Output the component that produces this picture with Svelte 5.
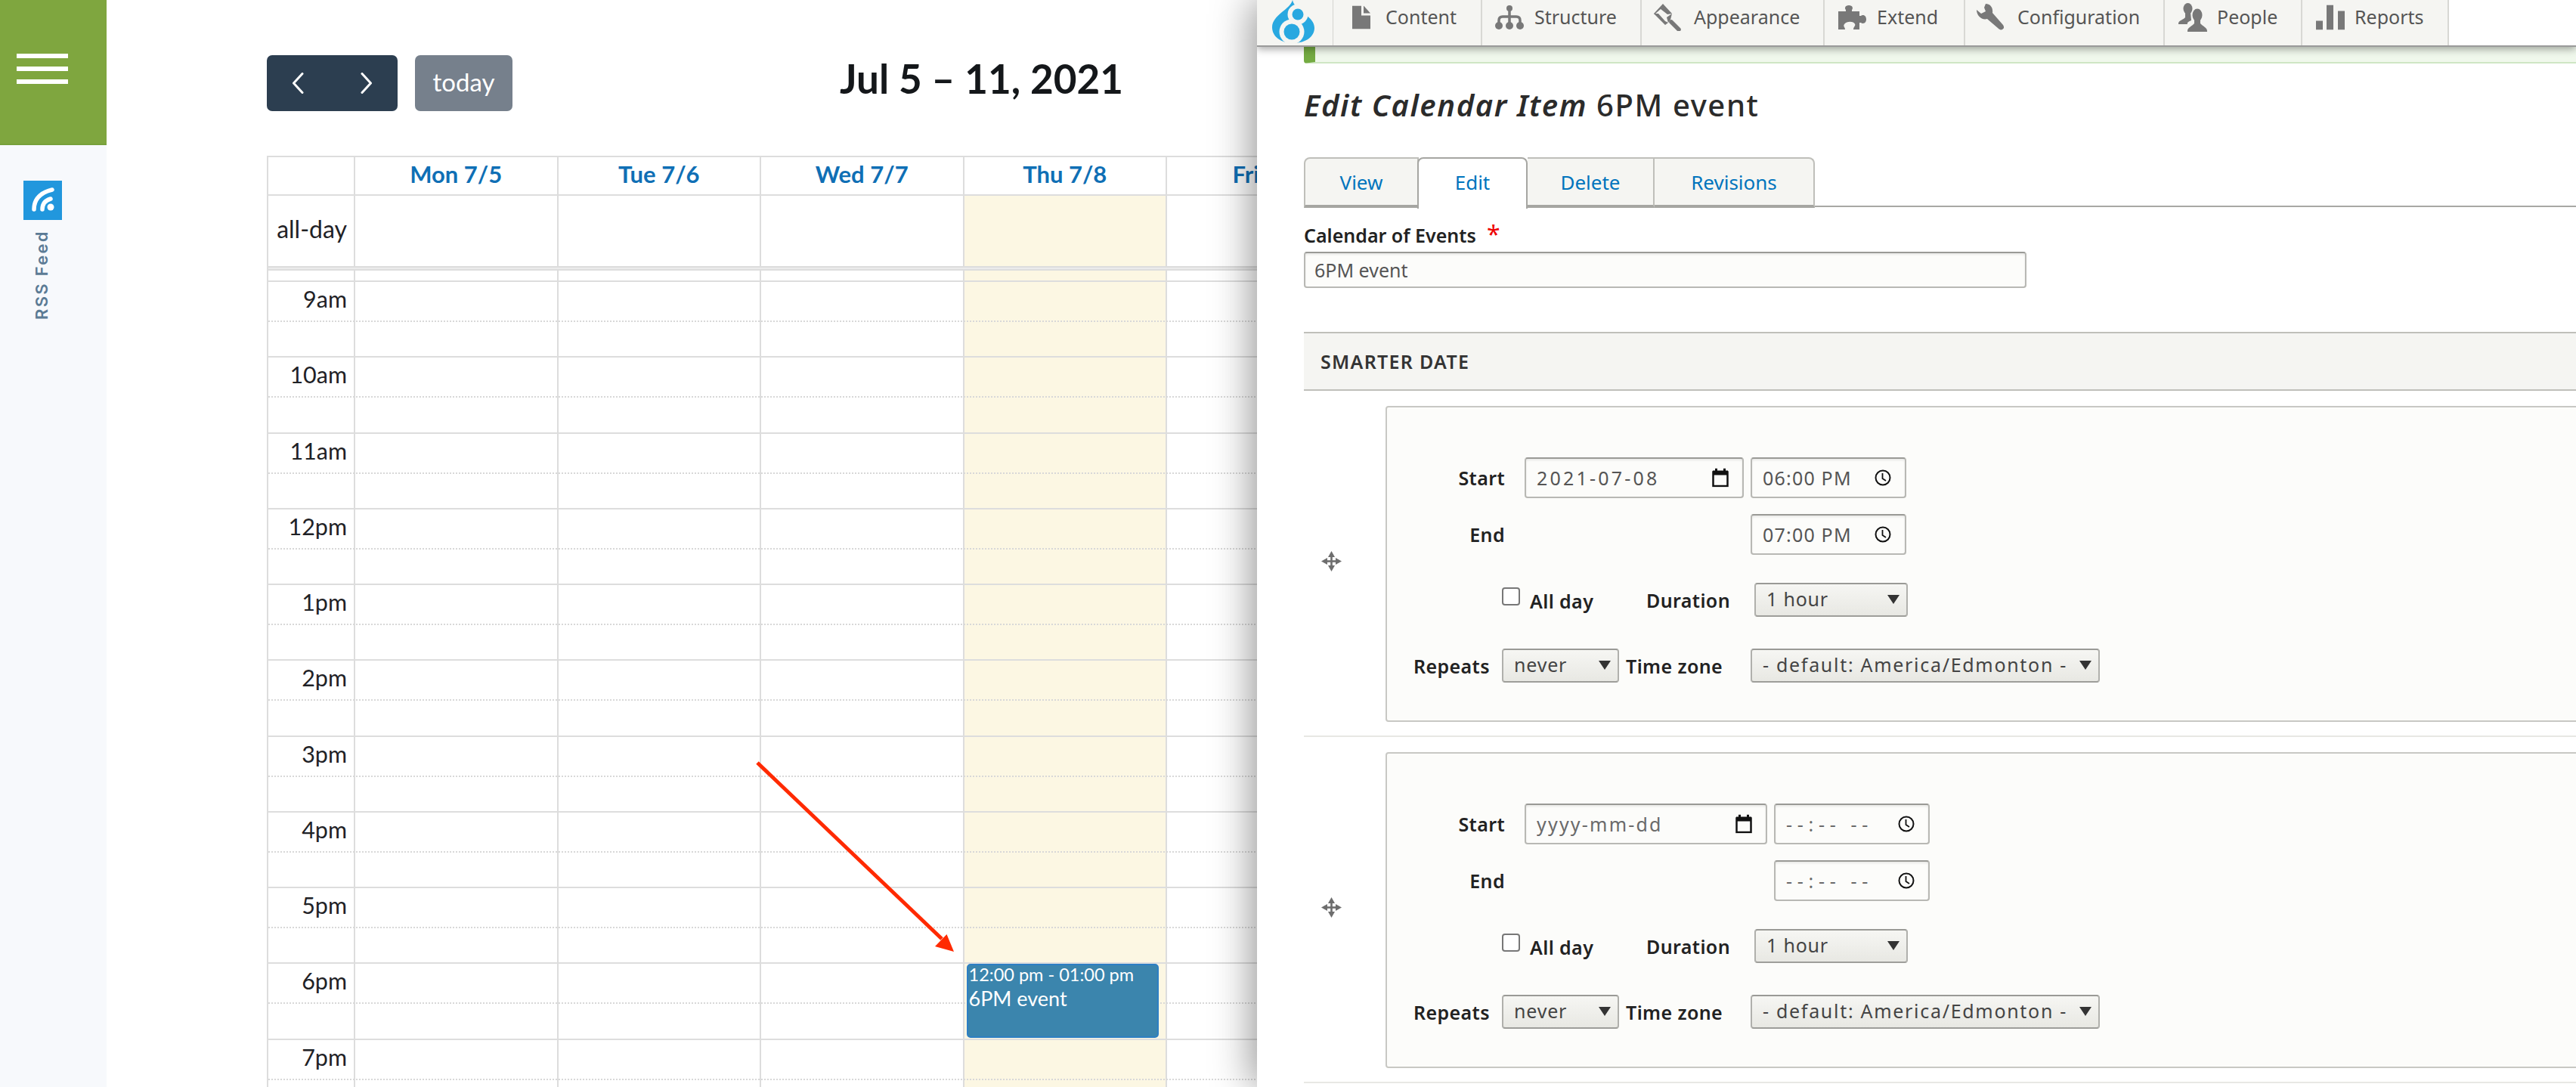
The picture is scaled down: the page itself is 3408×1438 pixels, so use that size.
<script>
  const hours = ['9am','10am','11am','12pm','1pm','2pm','3pm','4pm','5pm','6pm','7pm'];
  const days = ['Mon 7/5','Tue 7/6','Wed 7/7','Thu 7/8','Fri 7/9'];
  const TODAY = 3;
  const tools = [
    { key:'content', label:'Content', width:197, cx:37 },
    { key:'structure', label:'Structure', width:211, cx:36 },
    { key:'appearance', label:'Appearance', width:242, cx:34 },
    { key:'extend', label:'Extend', width:186, cx:37 },
    { key:'config', label:'Configuration', width:264, cx:33 },
    { key:'people', label:'People', width:182, cx:37 },
    { key:'reports', label:'Reports', width:194, cx:37 }
  ];
  const items = [
    { date:'2021-07-08', start:'06:00 PM', end:'07:00 PM', dateW:290, empty:false },
    { date:'yyyy-mm-dd', start:'--:-- --', end:'--:-- --', dateW:321, empty:true }
  ];
</script>

<div class="page">
  <aside class="side">
    <div class="burger"><i></i><i></i><i></i></div>
    <div class="rss">
      <svg viewBox="0 0 51 52" width="51" height="52"><rect width="51" height="52" fill="#2197dd"/>
        <g fill="none" stroke="#fff" stroke-width="5.5" stroke-linecap="round">
          <path d="M14 38C14 25 22 16 38 12"/><path d="M25 38C25 31 29 26 36 24"/>
        </g><circle cx="36" cy="35" r="4.5" fill="#fff"/></svg>
    </div>
    <div class="rsslabel">RSS Feed</div>
  </aside>

  <main class="cal">
    <div class="calhead">
      <div class="navgroup">
        <button class="nav" aria-label="previous"><svg width="16" height="28" viewBox="0 0 16 28"><path d="M14 1.5L2.5 14L14 26.5" fill="none" stroke="#fff" stroke-width="3" stroke-linecap="round" stroke-linejoin="round"/></svg></button>
        <button class="nav" aria-label="next"><svg width="16" height="28" viewBox="0 0 16 28"><path d="M2 1.5L13.5 14L2 26.5" fill="none" stroke="#fff" stroke-width="3" stroke-linecap="round" stroke-linejoin="round"/></svg></button>
      </div>
      <button class="today">today</button>
      <h2>Jul 5 – 11, 2021</h2>
    </div>

    <div class="table">
      <div class="row headrow">
        <div class="cell gut"></div>
        {#each days as d}<div class="cell day">{d}</div>{/each}
      </div>
      <div class="row alldayrow">
        <div class="cell gut">all-day</div>
        {#each days as d, i}<div class="cell" class:today-col={i === TODAY}></div>{/each}
      </div>
      <div class="divider"></div>
      <div class="row gaprow">
        <div class="cell gut"></div>
        {#each days as d, i}<div class="cell" class:today-col={i === TODAY}></div>{/each}
      </div>
      {#each hours as h}
        <div class="row hour">
          <div class="cell gut"><span>{h}</span></div>
          {#each days as d, i}
            <div class="cell" class:today-col={i === TODAY}>
              {#if h === '6pm' && i === TODAY}
                <div class="event">
                  <div class="etime">12:00 pm - 01:00 pm</div>
                  <div class="etitle">6PM event</div>
                </div>
              {/if}
            </div>
          {/each}
        </div>
      {/each}
    </div>
  </main>

  <svg class="arrow" width="300" height="270" viewBox="0 0 300 270">
    <path d="M4 11L248 244" stroke="#ff2a00" stroke-width="5" fill="none"/>
    <path d="M264 261L254.500 238L239 254Z" fill="#ff2a00"/>
  </svg>

  <section class="panel">
    <nav class="toolbar">
      <div class="logo">
        <svg width="56" height="58" viewBox="0 0 56 58">
          <path fill="#29a8e0" d="M27 0C28 7 36 12 43 18C50 24 56 29 56 37C56 48 45 57 28 57C11 57 0 48 0 36C0 28 6 22 13 16C19 11 25 7 27 0Z"/>
          <circle cx="34" cy="19" r="13.500" fill="#f5f5f2"/>
          <circle cx="26" cy="42" r="16.500" fill="#f5f5f2"/>
          <circle cx="34" cy="19" r="7.500" fill="#29a8e0"/>
          <circle cx="26" cy="42" r="10.500" fill="#29a8e0"/>
        </svg>
      </div>
      {#each tools as t}
        <div class="tool" style:width="{t.width}px">
          <span class="ticon" style:left="{t.cx}px">
            {#if t.key === 'content'}
              <svg width="24" height="31" viewBox="0 0 24 31"><path fill="#787878" d="M0 0H12V13H24V31H0Z"/><path fill="#787878" d="M15 0L24 10H15Z"/></svg>
            {:else if t.key === 'structure'}
              <svg width="38" height="32" viewBox="0 0 38 32"><g fill="#787878"><circle cx="19" cy="4" r="4"/><circle cx="5" cy="27" r="5"/><circle cx="19" cy="27" r="5"/><circle cx="33" cy="27" r="5"/></g><path d="M19 4V27M5 27V20Q5 15 10 15H28Q33 15 33 20V27" stroke="#787878" stroke-width="3.500" fill="none"/></svg>
            {:else if t.key === 'appearance'}
              <svg width="36" height="36" viewBox="0 0 36 36"><g fill="#787878"><path d="M12 0L24 13L18 14L9 7L1 14L0 13Z"/><path d="M0 13L15 28L19 25L15 23L6 13Z"/><path d="M24 13L22 21L19 25L17 18Z"/></g><path d="M23 24L33 34" stroke="#787878" stroke-width="5.500" stroke-linecap="round"/></svg>
            {:else if t.key === 'extend'}
              <svg width="38" height="32" viewBox="0 0 38 32"><path fill="#787878" d="M0 8H10V6C8 4 9 0 14 0C19 0 20 4 18 6V8H28V14H30C32 12 37 13 37 18.500C37 24 32 25 30 23H28V32H20C20 28 24 27 21.500 24C19 21 11 21 8 25C6 28 9 29 9 32H0Z"/></svg>
            {:else if t.key === 'config'}
              <svg width="36" height="36" viewBox="0 0 36 36"><path fill="#787878" d="M12 0C18 0 22 5 21 12L35 28C37 31 36 33 34 34C32 35 30 34 28 32L14 20C7 22 0 16 0 8L6 13L12 10L10 5Z"/></svg>
            {:else if t.key === 'people'}
              <svg width="38" height="38" viewBox="0 0 38 38"><g fill="#787878"><ellipse cx="12.500" cy="7.500" rx="6" ry="7.500"/><path d="M9 12V19C7 22 0 23 0 27V28H12C11 26 14 24 17 23L16 12Z"/><ellipse cx="25" cy="16" rx="6.500" ry="8.500"/><path d="M21 22V27C18 31 12 32 12 37V38H38V37C38 32 32 31 29 27V22Z"/></g></svg>
            {:else}
              <svg width="38" height="33" viewBox="0 0 38 33"><g fill="#787878"><rect y="21" width="9" height="12"/><rect x="14" width="9" height="33"/><rect x="29" y="8" width="9" height="25"/></g></svg>
            {/if}
          </span>
          <span class="tlabel">{t.label}</span>
        </div>
      {/each}
    </nav>

    <div class="body">
      <div class="msg"></div>
      <h1><em>Edit Calendar Item</em> 6PM event</h1>

      <div class="tabs">
        <a class="tab t1" href="#view">View</a>
        <a class="tab t2 active" href="#edit">Edit</a>
        <a class="tab t3" href="#delete">Delete</a>
        <a class="tab t4" href="#revisions">Revisions</a>
      </div>

      <label class="ftitle" for="cal-title">Calendar of Events<span class="star">*</span></label>
      <input id="cal-title" class="titleinput" value="6PM event" readonly />

      <div class="band">SMARTER DATE</div>

      {#each items as it}
        <div class="item">
          <div class="handle">
            <svg width="27" height="27" viewBox="0 0 27 27"><g fill="#6e6e6e"><path d="M13.500 0L18 8H9Z"/><path d="M13.500 27L18 19H9Z"/><path d="M0 13.500L8 9V18Z"/><path d="M27 13.500L19 9V18Z"/><rect x="12.200" y="5" width="2.600" height="17"/><rect x="5" y="12.200" width="17" height="2.600"/></g></svg>
          </div>
          <div class="box">
            <div class="frow r1">
              <span class="lab startlab">Start</span>
              <div class="field" class:ph={it.empty} style:width="{it.dateW}px">
                <input class="dateinput" value={it.date} readonly aria-label="Start date" />
                <svg class="ico" width="22" height="25" viewBox="0 0 22 25"><path fill="none" stroke="#111" stroke-width="2.500" d="M1.500 5H20.500V23.500H1.500Z"/><path fill="#111" d="M1 3H21V9H1ZM4 0H7V4H4ZM15 0H18V4H15Z"/></svg>
              </div>
              <div class="field timef" class:ph={it.empty}>
                <input class="timeinput" value={it.start} readonly aria-label="Start time" />
                <svg class="ico" width="22" height="22" viewBox="0 0 22 22"><circle cx="11" cy="11" r="9.500" fill="none" stroke="#111" stroke-width="2"/><path d="M10.500 5V12L15 15" fill="none" stroke="#111" stroke-width="1.800"/></svg>
              </div>
            </div>
            <div class="frow r2">
              <span class="lab startlab">End</span>
              <div class="spacer" style:width="{it.dateW}px"></div>
              <div class="field timef" class:ph={it.empty}>
                <input class="timeinput" value={it.end} readonly aria-label="End time" />
                <svg class="ico" width="22" height="22" viewBox="0 0 22 22"><circle cx="11" cy="11" r="9.500" fill="none" stroke="#111" stroke-width="2"/><path d="M10.500 5V12L15 15" fill="none" stroke="#111" stroke-width="1.800"/></svg>
              </div>
            </div>
            <div class="frow r3">
              <span class="check"></span>
              <span class="lab allday">All day</span>
              <span class="lab duration">Duration</span>
              <div class="sel s-hour">1 hour</div>
            </div>
            <div class="frow r4">
              <span class="lab repeats">Repeats</span>
              <div class="sel s-never">never</div>
              <span class="lab tz">Time zone</span>
              <div class="sel s-tz">- default: America/Edmonton -</div>
            </div>
          </div>
        </div>
      {/each}
    </div>
  </section>
</div>

<style>
  :global(body) { margin: 0; background: #fff; }
  .page { position: relative; width: 3408px; height: 1438px; overflow: hidden; display: flex; background: #fff; font-family: "Lato", sans-serif; }

  /* sidebar */
  .side { width: 141px; flex: none; background: #f7f9fc; display: flex; flex-direction: column; align-items: flex-start; }
  .burger { width: 141px; height: 190px; background: #7fa63f; border-bottom: 2px solid #76a03a; display: flex; flex-direction: column; gap: 11px; }
  .burger i { display: block; width: 68px; height: 6px; background: #fff; margin-left: 22px; }
  .burger i:first-child { margin-top: 71px; }
  .rss { margin: 47px 0 0 31px; height: 52px; }
  .rss svg { display: block; }
  .rsslabel { margin: 18px 0 0 43px; writing-mode: vertical-rl; transform: rotate(180deg); font: 600 22px/24px "Inter", sans-serif; letter-spacing: 2.300px; color: #5b7b95; height: 114px; white-space: nowrap; }

  /* calendar */
  .cal { padding-left: 212px; flex: none; width: 1600px; box-sizing: border-box; }
  .calhead { height: 206px; box-sizing: border-box; padding-top: 73px; display: flex; align-items: flex-start; position: relative; }
  .navgroup { width: 173px; height: 74px; box-sizing: border-box; background: #2c3e50; border-radius: 7px; display: flex; }
  .nav { width: 50%; height: 100%; background: none; border: 0; padding: 0; display: flex; align-items: center; justify-content: center; }
  .nav:first-child { padding-right: 4px; }
  .nav:last-child { padding-left: 4px; }
  .today { margin-left: 23px; width: 129px; height: 74px; background: #76808c; border: 0; border-radius: 7px; color: #fff; font: 400 33px "Lato", sans-serif; padding: 0 0 4px; }
  h2 { position: absolute; left: 758px; top: 76px; margin: 0; font: 700 53px/56px "Lato", sans-serif; color: #14171a; white-space: nowrap; }

  .table { border-top: 2px solid #ddd; border-left: 2px solid #ddd; width: 1460px; box-sizing: border-box; }
  .row { display: grid; grid-template-columns: 113px repeat(5, 268.500px); position: relative; box-sizing: border-box; }
  .cell { border-left: 2px solid #ddd; box-sizing: border-box; position: relative; }
  .cell.gut { border-left: 0; color: #1f2226; font-size: 30.500px; text-align: right; padding-right: 9px; }
  .headrow { height: 51px; border-bottom: 2px solid #ddd; }
  .day { color: #0f6fb5; font-weight: 700; font-size: 31px; line-height: 45px; text-align: center; }
  .alldayrow { height: 93px; }
  .alldayrow .gut { line-height: 88px; padding-right: 9px; font-size: 32px; }
  .divider { height: 2px; background: #ebebeb; border-top: 2px solid #ddd; border-bottom: 2px solid #ddd; }
  .gaprow { height: 13px; }
  .today-col { background: #fcf7e3; }
  .hour { height: 100.250px; border-top: 2px solid #ddd; }
  .hour::after { content: ""; position: absolute; left: 0; right: 0; top: 51px; border-top: 2px dotted #d8d8d8; }
  .hour .gut span { position: absolute; right: 9px; top: 0; line-height: 44px; }
  .event { position: absolute; z-index: 2; left: 3px; right: 9px; top: 0; height: 98px; box-sizing: border-box; background: #3b85ad; border: 2px solid #2d7fc4; border-radius: 5px; color: #fff; padding-left: 1px; }
  .etime { font-size: 23.500px; line-height: 30px; margin-top: -3px; }
  .etitle { font-size: 27px; line-height: 32px; margin-top: 1px; }

  .arrow { position: absolute; left: 998px; top: 998px; z-index: 3; }

  /* panel */
  .panel { position: absolute; z-index: 5; left: 1663px; top: 0; width: 1745px; height: 1438px; background: #fff; box-shadow: -6px 0 50px rgba(0,0,0,.42); overflow: hidden; font-family: "Noto Sans", sans-serif; color: #222; }
  .toolbar { display: flex; height: 60px; border-bottom: 2px solid #9a9a9a; box-shadow: 0 3px 10px rgba(0,0,0,.35); position: relative; z-index: 2; background: #fff; }
  .logo { background: #f5f5f2; border-right: 1px solid #d4d4d0; padding-left: 20px; box-sizing: border-box; width: 101px; }
  .logo svg { display: block; }
  .tool { position: relative; flex: none; height: 60px; box-sizing: border-box; background: #f5f5f2; border-right: 2px solid #d8d8d4; padding-left: 69px; }
  .ticon { position: absolute; top: 23px; transform: translate(-50%, -50%); line-height: 0; }
  .tlabel { font-size: 25px; line-height: 44px; color: #555; display: block; white-space: nowrap; }

  .body { padding-left: 62px; }
  .msg { height: 24px; margin-top: -2px; box-sizing: border-box; background: #f0f8ec; border-left: 15px solid #74ab42; border-bottom: 2px solid #cfe6c4; border-radius: 0 0 0 4px; }
  h1 { margin: 30px 0 0; font-size: 40px; line-height: 50px; font-weight: 500; color: #2b2b2b; white-space: nowrap; letter-spacing: 1.600px; }
  h1 em { font-style: italic; font-weight: 600; }

  .tabs { margin-top: 44px; height: 67px; display: flex; position: relative; box-sizing: border-box; align-items: flex-start; }
  .tabs::after { content: ""; position: absolute; left: 0; right: 0; top: 64px; border-top: 2px solid #a8a8a4; }
  .tab { height: 67px; box-sizing: border-box; background: #f5f5f2; border: 2px solid #bfbfba; border-bottom: 4px solid #a6a6a2; border-left: 0; color: #0074bd; font-size: 26px; line-height: 62px; text-align: center; text-decoration: none; position: relative; z-index: 1; }
  .t1 { width: 152px; border-left: 2px solid #bfbfba; border-radius: 8px 0 0 0; }
  .t2 { width: 146px; background: #fff; border: 2px solid #a6a6a2; border-bottom: 0; border-radius: 8px 8px 0 0; margin-left: -2px; height: 68px; z-index: 2; }
  .t3 { width: 168px; }
  .t4 { width: 212px; border-radius: 0 8px 0 0; }

  .ftitle { display: block; margin-top: 17px; height: 41px; font-size: 25px; line-height: 38px; font-weight: 600; color: #222; position: relative; }
  .star { color: #e00; font-size: 32px; position: absolute; left: 242px; top: -2px; line-height: 40px; font-weight: 400; }
  .titleinput { display: block; width: 956px; height: 48px; box-sizing: border-box; border: 2px solid #b8b8b4; border-top-color: #9a9a96; border-radius: 4px; background: #fcfcfa; box-shadow: inset 0 2px 3px rgba(0,0,0,.08); padding: 0 12px; font: 400 25px "Noto Sans", sans-serif; color: #555; margin: 0; outline: none; }

  .band { margin-top: 58px; height: 78px; box-sizing: border-box; background: #f5f5f2; border-top: 2px solid #bfbfba; border-bottom: 2px solid #bfbfba; padding-left: 22px; font-size: 25px; font-weight: 600; line-height: 74px; color: #333; letter-spacing: 1.300px; }

  .item { display: flex; align-items: flex-start; border-bottom: 2px solid #e8e8e4; padding-top: 20px; height: 458px; box-sizing: border-box; }
  .handle { width: 108px; flex: none; padding-left: 23px; box-sizing: border-box; margin-top: 192px; }
  .handle svg { display: block; }
  .box { flex: 1; height: 418px; box-sizing: border-box; margin-right: -20px; background: #fcfcfa; border: 2px solid #c8c8c4; border-radius: 4px; padding-top: 66px; }

  .frow { display: flex; align-items: center; white-space: nowrap; }
  .r1, .r2 { height: 54px; }
  .r2 { margin-top: 21px; }
  .r3 { height: 45px; margin-top: 37px; }
  .r4 { height: 45px; margin-top: 42px; }
  .lab { font-size: 25px; font-weight: 600; color: #222; letter-spacing: .4px; }
  .startlab { width: 156px; text-align: right; margin-right: 26px; }
  .field { position: relative; height: 54px; box-sizing: border-box; background: #fcfcfa; border: 2px solid #b8b8b4; border-top-color: #9a9a96; border-radius: 4px; box-shadow: inset 0 2px 3px rgba(0,0,0,.08); display: flex; align-items: center; flex: none; }
  .field input { border: 0; background: none; outline: none; padding: 0 0 0 14px; margin: 0; width: 78%; height: 100%; box-sizing: border-box; font: 400 25px "Noto Sans", sans-serif; color: #555; }
  .field .dateinput { letter-spacing: 3.200px; }
  .field .timeinput { letter-spacing: 1.200px; }
  .field.ph .dateinput { letter-spacing: 2.200px; color: #6a6a6a; }
  .field.ph .timeinput { letter-spacing: 6.700px; color: #6a6a6a; }
  .field .ico { position: absolute; right: 18px; top: 50%; transform: translateY(-50%); }
  .timef { width: 206px; margin-left: 9px; }
  .spacer { flex: none; }
  .check { width: 24px; height: 24px; box-sizing: border-box; border: 2px solid #777; border-radius: 4px; background: #fff; margin-left: 152px; margin-top: -10px; flex: none; }
  .allday { margin-left: 13px; width: 154px; position: relative; top: 1px; }
  .duration { width: 143px; }
  .sel { position: relative; height: 45px; box-sizing: border-box; border: 2px solid #b0b0ac; border-top-color: #9a9a96; border-bottom-color: #9e9e9a; border-radius: 4px; background: linear-gradient(#f6f6f3, #e8e8e3); padding-left: 14px; font-size: 25px; line-height: 38px; color: #444; flex: none; letter-spacing: .8px; }
  .sel::after { content: ""; position: absolute; right: 9px; top: 14px; border-left: 8px solid transparent; border-right: 8px solid transparent; border-top: 12px solid #333; }
  .s-hour { width: 203px; }
  .repeats { margin-left: 35px; width: 117px; }
  .s-never { width: 155px; }
  .tz { margin-left: 9px; width: 165px; }
  .s-tz { width: 462px; letter-spacing: 1.700px; }
</style>
